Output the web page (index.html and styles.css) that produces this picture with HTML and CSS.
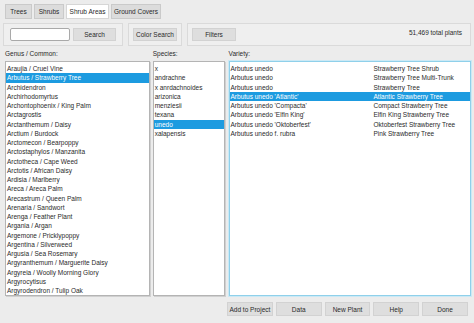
FILE: index.html
```html
<!DOCTYPE html>
<html lang="en">
<head>
  <meta charset="UTF-8">
  <title>Shrub Areas</title>
  <link rel="stylesheet" href="styles.css">
</head>
<body>

  <div class="tabs">
    <div class="tab">Trees</div>
    <div class="tab">Shrubs</div>
    <div class="tab active">Shrub Areas</div>
    <div class="tab">Ground Covers</div>
  </div>

  <div class="toolbar">
    <div class="group g-search">
      <input type="text" class="search-box">
      <button class="btn btn-search">Search</button>
    </div>
    <div class="group g-color">
      <button class="btn btn-color">Color Search</button>
    </div>
    <div class="group g-filter">
      <button class="btn btn-filter">Filters</button>
      <span class="total">51,469 total plants</span>
    </div>
  </div>

  <div class="columns">
    <div class="col col-genus">
      <div class="label">Genus / Common:</div>
      <ul class="list">
        <li>Araujia / Cruel Vine</li>
        <li class="sel">Arbutus / Strawberry Tree</li>
        <li>Archidendron</li>
        <li>Archirhodomyrtus</li>
        <li>Archontophoenix / King Palm</li>
        <li>Arctagrostis</li>
        <li>Arctanthemum / Daisy</li>
        <li>Arctium / Burdock</li>
        <li>Arctomecon / Bearpoppy</li>
        <li>Arctostaphylos / Manzanita</li>
        <li>Arctotheca / Cape Weed</li>
        <li>Arctotis / African Daisy</li>
        <li>Ardisia / Marlberry</li>
        <li>Areca / Areca Palm</li>
        <li>Arecastrum / Queen Palm</li>
        <li>Arenaria / Sandwort</li>
        <li>Arenga / Feather Plant</li>
        <li>Argania / Argan</li>
        <li>Argemone / Pricklypoppy</li>
        <li>Argentina / Silverweed</li>
        <li>Argusia / Sea Rosemary</li>
        <li>Argyranthemum / Marguerite Daisy</li>
        <li>Argyreia / Woolly Morning Glory</li>
        <li>Argyrocytisus</li>
        <li>Argyrodendron / Tulip Oak</li>
      </ul>
    </div>
    <div class="col col-species">
      <div class="label">Species:</div>
      <ul class="list">
        <li>x</li>
        <li>andrachne</li>
        <li>x anrdachnoides</li>
        <li>arizonica</li>
        <li>menziesii</li>
        <li>texana</li>
        <li class="sel">unedo</li>
        <li>xalapensis</li>
      </ul>
    </div>
    <div class="col col-variety">
      <div class="label">Variety:</div>
      <ul class="list focus">
        <li><span>Arbutus unedo</span><span>Strawberry Tree Shrub</span></li>
        <li><span>Arbutus unedo</span><span>Strawberry Tree Multi-Trunk</span></li>
        <li><span>Arbutus unedo</span><span>Strawberry Tree</span></li>
        <li class="sel"><span>Arbutus unedo 'Atlantic'</span><span>Atlantic Strawberry Tree</span></li>
        <li><span>Arbutus unedo 'Compacta'</span><span>Compact Strawberry Tree</span></li>
        <li><span>Arbutus unedo 'Elfin King'</span><span>Elfin King Strawberry Tree</span></li>
        <li><span>Arbutus unedo 'Oktoberfest'</span><span>Oktoberfest Strawberry Tree</span></li>
        <li><span>Arbutus unedo f. rubra</span><span>Pink Strawberry Tree</span></li>
      </ul>
    </div>
  </div>

  <div class="actions">
    <button class="btn">Add to Project</button>
    <button class="btn">Data</button>
    <button class="btn">New Plant</button>
    <button class="btn">Help</button>
    <button class="btn">Done</button>
  </div>

</body>
</html>
```

FILE: styles.css
```css
body {
  margin: 0;
  padding: 4px 3px 0 3px;
  background: #ececec;
  font-family: "Liberation Sans", Arial, sans-serif;
  font-size: 6.5px;
  color: #2a2a2a;
  width: 468px;
  height: 319px;
  overflow: hidden;
}

.tabs {
  display: flex;
  gap: 2px;
  padding-left: 2px;
  height: 15px;
}

.tab {
  display: flex;
  align-items: center;
  justify-content: center;
  background: #dcdcdc;
  border: 1px solid #cacaca;
  box-sizing: border-box;
  padding: 0;
  white-space: nowrap;
}

.tab:nth-child(1) { width: 27px; }
.tab:nth-child(2) { width: 30px; }
.tab:nth-child(3) { width: 43px; }
.tab:nth-child(4) { width: 50px; }

.tab.active {
  background: #fff;
  border-color: #d6d6d6;
}

.toolbar {
  display: flex;
  gap: 5px;
  margin-top: 4px;
  height: 23px;
}

.group {
  display: flex;
  align-items: center;
  border: 1px solid #dadada;
  background: #efefef;
  box-sizing: border-box;
  padding: 0 4px;
  gap: 3px;
}

.g-search { width: 120px; padding-left: 6px; }
.g-color { width: 54px; }
.g-filter { flex: 1; justify-content: space-between; padding-right: 8px; }

.search-box {
  width: 60px;
  height: 13px;
  box-sizing: border-box;
  border: 1px solid #a9a9a9;
  border-radius: 2px;
  padding: 0;
  margin: 0;
  background: #fff;
}

.btn {
  font-family: "Liberation Sans", Arial, sans-serif;
  font-size: 6.5px;
  color: #2a2a2a;
  background: #dedede;
  border: 1px solid #d2d2d2;
  height: 13px;
  padding: 0;
  margin: 0;
  white-space: nowrap;
}

.btn-search { width: 43px; }
.btn-color { width: 44px; }
.btn-filter { width: 44px; }

.total {
  align-self: flex-start;
  margin-top: 5px;
}

.columns {
  display: flex;
  gap: 3px;
  margin-top: 3px;
  padding-left: 2px;
}

.label {
  height: 10px;
  line-height: 10px;
  margin-bottom: 2px;
}

.list {
  list-style: none;
  margin: 0;
  padding: 2px 0 0 0;
  height: 235px;
  box-sizing: border-box;
  background: #fff;
  border: 1px solid #b4b4b4;
  box-shadow: 1px 1px 0 #d0d0d0;
  overflow: hidden;
}

.list li {
  height: 9.25px;
  line-height: 9.25px;
  padding-left: 1px;
  white-space: nowrap;
}

.list li.sel {
  background: #1d9be0;
  color: #fff;
}

.col-genus { width: 145px; }
.col-species { width: 72px; }
.col-variety { width: 243px; margin-left: 1px; }

.list.focus {
  border-color: #8fd0ea;
  box-shadow: 0 0 0 1px #cbe9f5;
}

.list.focus li {
  display: flex;
}

.list.focus li span:first-child {
  width: 143px;
}

.actions {
  display: flex;
  gap: 3px;
  margin: 6px 0 0 224px;
  width: 241px;
}

.actions .btn {
  flex: 1;
  height: 14px;
}
```
